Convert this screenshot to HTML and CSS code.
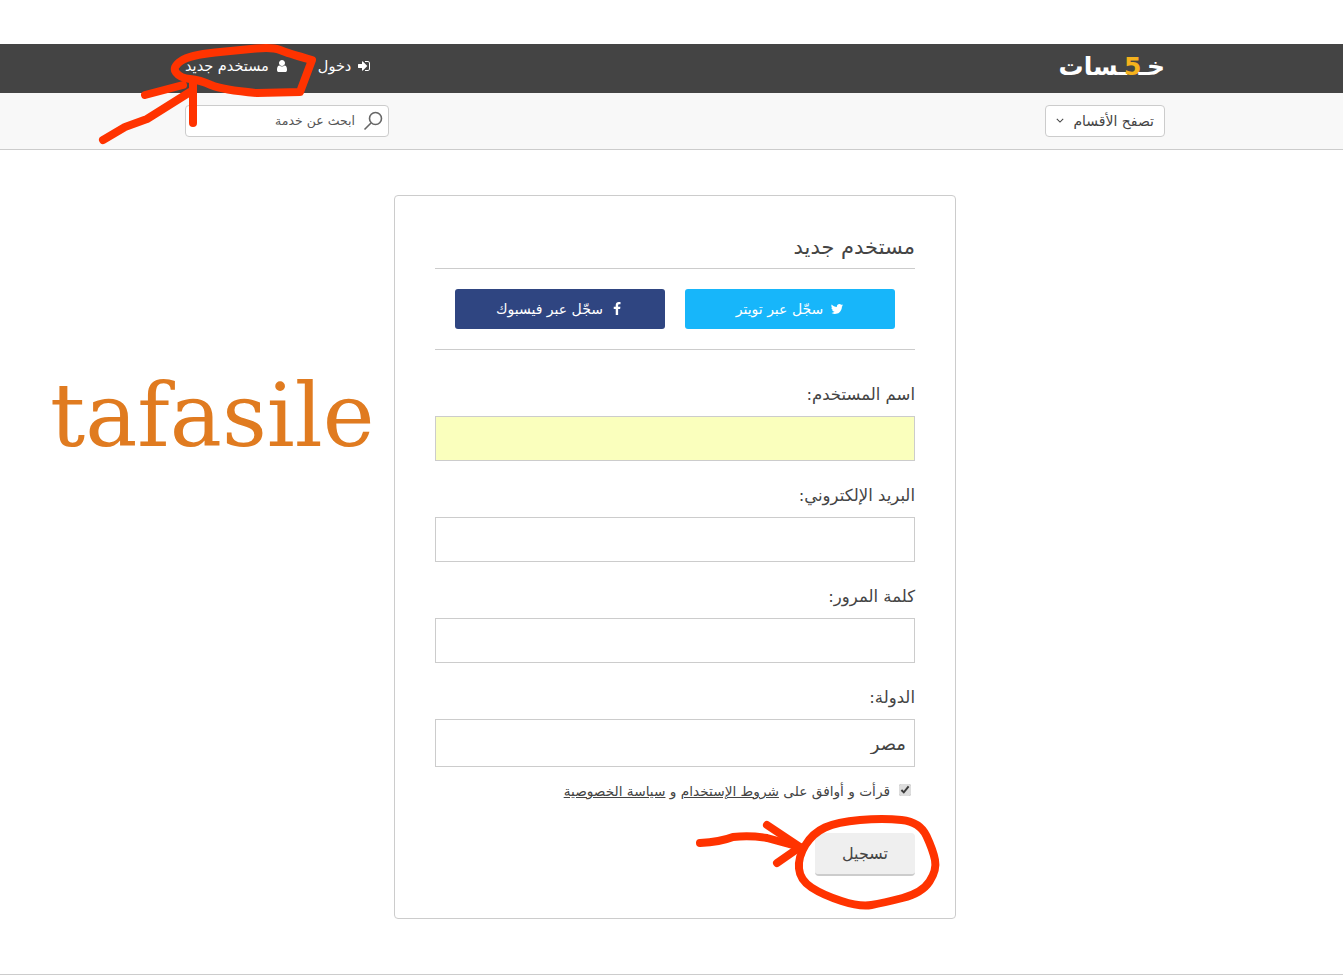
FILE: index.html
```html
<!DOCTYPE html>
<html lang="ar" dir="rtl">
<head>
  <meta charset="UTF-8">
  <meta name="viewport" content="width=device-width, initial-scale=1.0">
  <title>مستخدم جديد</title>
  <link rel="stylesheet" href="styles.css">
</head>
<body>
  <header class="topbar">
    <div class="wrap topbar-inner">
      <a href="#" class="logo">خـ<span class="logo-five">5</span>ـسات</a>
      <nav class="topnav">
        <a href="#" class="topnav-link">
          <svg class="icon" viewBox="0 0 1792 1792"><path d="M1312 896q0 26-19 45l-544 544q-19 19-45 19t-45-19-19-45v-288h-448q-26 0-45-19t-19-45v-384q0-26 19-45t45-19h448v-288q0-26 19-45t45-19 45 19l544 544q19 19 19 45zm352-352v704q0 119-84.5 203.5t-203.5 84.5h-320q-13 0-22.5-9.5t-9.5-22.5q0-4-1-20t-.5-26.5 3-23.5 10-19.5 20.5-6.5h320q66 0 113-47t47-113v-704q0-66-47-113t-113-47h-312l-11.5-1-11.5-3-8-5.5-7-9-2-13.5q0-4-1-20t-.5-26.5 3-23.5 10-19.5 20.5-6.5h320q119 0 203.5 84.5t84.5 203.5z"/></svg>
          دخول
        </a>
        <a href="#" class="topnav-link">
          <svg class="icon" viewBox="0 0 1792 1792"><path d="M1536 1399q0 109-62.5 187t-150.5 78h-854q-88 0-150.5-78t-62.5-187q0-85 8.5-160.5t31.5-152 58.5-131 94-89 134.5-34.5q131 128 313 128t313-128q76 0 134.5 34.5t94 89 58.5 131 31.5 152 8.5 160.5zm-256-887q0 159-112.5 271.5t-271.5 112.5-271.5-112.5-112.5-271.5 112.5-271.5 271.5-112.5 271.5 112.5 112.5 271.5z"/></svg>
          مستخدم جديد
        </a>
      </nav>
    </div>
  </header>

  <div class="subbar">
    <div class="wrap subbar-inner">
      <button class="browse" type="button">
        تصفح الأقسام
        <svg class="chevron" viewBox="0 0 10 6"><path d="M1 1l4 4 4-4"/></svg>
      </button>
      <label class="search">
        <svg class="search-icon" viewBox="0 0 20 20"><circle cx="12.5" cy="7.5" r="6"/><path d="M8 12l-6.5 6.5"/></svg>
        <input type="text" placeholder="ابحث عن خدمة">
      </label>
    </div>
  </div>

  <main class="wrap main">
    <form class="card">
      <h1 class="card-title">مستخدم جديد</h1>
      <div class="social">
        <a href="#" class="social-btn twitter">
          <svg class="icon" viewBox="0 0 1792 1792"><path d="M1684 408q-67 98-162 167 1 14 1 42 0 130-38 259.5t-115.5 248.5-184.5 210.5-258 146-323 54.5q-271 0-496-145 35 4 78 4 225 0 401-138-105-2-188-64.5t-114-159.5q33 5 61 5 43 0 85-11-112-23-185.5-111.5t-73.5-205.5v-4q68 38 146 41-66-44-105-115t-39-154q0-88 44-163 121 149 294.5 238.5t371.5 99.5q-8-38-8-74 0-134 94.5-228.5t228.5-94.5q140 0 236 102 109-21 205-78-37 115-142 178 92-10 184-50z"/></svg>
          سجّل عبر تويتر
        </a>
        <a href="#" class="social-btn facebook">
          <svg class="icon" viewBox="0 0 1792 1792"><path d="M1343 12v264h-157q-86 0-116 36t-30 108v189h293l-39 296h-254v759h-306v-759h-255v-296h255v-218q0-186 104-288.5t277-102.5q147 0 228 12z"/></svg>
          سجّل عبر فيسبوك
        </a>
      </div>

      <div class="field">
        <label for="username">اسم المستخدم:</label>
        <input id="username" type="text" class="autofilled">
      </div>
      <div class="field">
        <label for="email">البريد الإلكتروني:</label>
        <input id="email" type="text">
      </div>
      <div class="field">
        <label for="password">كلمة المرور:</label>
        <input id="password" type="password">
      </div>
      <div class="field">
        <label for="country">الدولة:</label>
        <select id="country"><option>مصر</option></select>
      </div>

      <label class="terms">
        <input type="checkbox" checked>
        <span>قرأت و أوافق على <a href="#">شروط الإستخدام</a> و <a href="#">سياسة الخصوصية</a></span>
      </label>

      <button class="submit" type="button">تسجيل</button>
    </form>
  </main>

  <footer class="footer"></footer>

  <div class="stamp">tafasile</div>

  <svg class="scribble" viewBox="0 0 1343 978">
    <path d="M181 61Q190 55 215 52.5Q240 50 256 48.5Q273 47 280 50Q287 53 312 60L300 92L257 93Q223 90 211 85Q200 80 190 79Q180 78 176 72.5Q172 67 181 61Z"/>
    <path d="M145 95L183 85"/>
    <path d="M103 140L125 127L147 119L190 92"/>
    <path d="M193 83L193 123"/>
    <path d="M825 827.5Q837 822 860 820Q883 818 901.5 820Q920 822 926.5 836Q933 850 935 860Q937 870 929.5 881.5Q922 893 902.5 898Q883 903 871.5 905Q860 907 841.5 901Q823 895 811.5 887.5Q800 880 799 868.5Q798 857 805.5 845Q813 833 825 827.5Z"/>
    <path d="M700 843Q720 842 733 837Q750 835 767 838L800 847"/>
    <path d="M767 825L800 847L777 863"/>
  </svg>
</body>
</html>
```

FILE: styles.css
```css
* {
  box-sizing: border-box;
}
html, body {
  margin: 0;
}
body {
  font-family: "DejaVu Sans", sans-serif;
  color: #444;
  background-color: #fff;
  padding-top: 44px;
  position: relative;
  height: 978px;
  overflow: hidden;
}
a {
  color: inherit;
  text-decoration: none;
}
.wrap {
  width: 980px;
  margin-left: 178px;
  margin-right: 178px;
}
.icon {
  width: 14px;
  height: 14px;
  fill: currentColor;
  flex: none;
}

/* top bar */
.topbar {
  height: 49px;
  background-color: #444;
}
.topbar-inner {
  height: 100%;
  display: flex;
  align-items: center;
  justify-content: space-between;
  padding-bottom: 5px;
}
.logo {
  color: #fff;
  font-size: 25px;
  font-weight: bold;
  line-height: 1;
  white-space: nowrap;
}
.logo-five {
  color: #f5b21d;
  margin: 0 -3px;
}
.topnav {
  display: flex;
  gap: 29px;
}
.topnav-link {
  display: flex;
  align-items: center;
  gap: 6px;
  color: #fff;
  font-size: 14.5px;
}

/* search bar */
.subbar {
  height: 57px;
  background-color: #f8f8f8;
  border-bottom: 1px solid #ccc;
}
.subbar-inner {
  height: 100%;
  display: flex;
  align-items: center;
  justify-content: space-between;
  padding-bottom: 1px;
}
.browse {
  display: flex;
  align-items: center;
  gap: 9px;
  height: 32px;
  padding: 0 10px;
  font: 14px "DejaVu Sans", sans-serif;
  color: #444;
  background-color: #fff;
  border: 1px solid #ccc;
  border-radius: 4px;
}
.chevron {
  width: 8px;
  height: 5px;
  fill: none;
  stroke: #444;
  stroke-width: 1.3;
}
.search {
  display: flex;
  align-items: center;
  gap: 8px;
  width: 204px;
  height: 32px;
  padding: 0 5px 0 10px;
  background-color: #fff;
  border: 1px solid #ccc;
  border-radius: 4px;
}
.search-icon {
  width: 20px;
  height: 20px;
  flex: none;
  fill: none;
  stroke: #666;
  stroke-width: 1.6;
}
.search input {
  flex: 1;
  min-width: 0;
  padding: 0;
  border: 0;
  outline: 0;
  font: 12.5px "DejaVu Sans", sans-serif;
}
.search input::placeholder {
  color: #555;
  opacity: 1;
}

/* register card */
.main {
  display: flex;
  justify-content: center;
  padding-top: 45px;
}
.card {
  width: 562px;
  height: 724px;
  padding: 35px 40px 0;
  background-color: #fff;
  border: 1px solid #ccc;
  border-radius: 4px;
}
.card-title {
  margin: 0;
  height: 38px;
  font-size: 21px;
  font-weight: normal;
  line-height: 32px;
  border-bottom: 1px solid #ccc;
}
.social {
  display: flex;
  justify-content: center;
  gap: 20px;
  padding: 20px 0;
  margin-bottom: 30px;
  border-bottom: 1px solid #ccc;
}
.social-btn {
  display: flex;
  align-items: center;
  justify-content: center;
  gap: 7px;
  width: 210px;
  height: 40px;
  color: #fff;
  font-size: 14px;
  border-radius: 3px;
}
.twitter {
  background-color: #17b6fa;
}
.facebook {
  background-color: #2f4581;
}
.field {
  margin-bottom: 20px;
}
.field label {
  display: block;
  height: 36px;
  font-size: 16.5px;
  line-height: 30px;
}
.field input,
.field select {
  display: block;
  width: 100%;
  height: 45px;
  padding: 0 8px;
  font: 18px "DejaVu Sans", sans-serif;
  color: #444;
  background-color: #fff;
  border: 1px solid #ccc;
  border-radius: 0;
  outline: 0;
  appearance: none;
}
.field select {
  height: 48px;
}
.field input.autofilled {
  background-color: #faffbd;
}
.terms {
  display: flex;
  align-items: center;
  gap: 9px;
  margin-top: -4px;
  padding-right: 4px;
  font-size: 13.7px;
}
.terms input {
  width: 12px;
  height: 12px;
  margin: 0 0 3px;
  flex: none;
  accent-color: #ddd;
}
.terms a {
  text-decoration: underline;
}
.submit {
  display: block;
  width: 100px;
  height: 43px;
  margin-top: 34px;
  font: 16px "DejaVu Sans", sans-serif;
  color: #444;
  background-color: #efefef;
  border: 0;
  border-bottom: 2px solid #ccc;
  border-radius: 4px;
}

.footer {
  margin-top: 55px;
  border-top: 1px solid #ccc;
}

/* added on top of the screenshot */
.stamp {
  position: absolute;
  left: 50px;
  top: 366px;
  direction: ltr;
  font-family: "DejaVu Serif", serif;
  font-size: 87.5px;
  line-height: 100px;
  color: #e07b20;
}
.scribble {
  position: absolute;
  left: 0;
  top: 0;
  width: 1343px;
  height: 978px;
  pointer-events: none;
  fill: none;
  stroke: #ff3300;
  stroke-width: 8;
  stroke-linecap: round;
  stroke-linejoin: round;
}
```
